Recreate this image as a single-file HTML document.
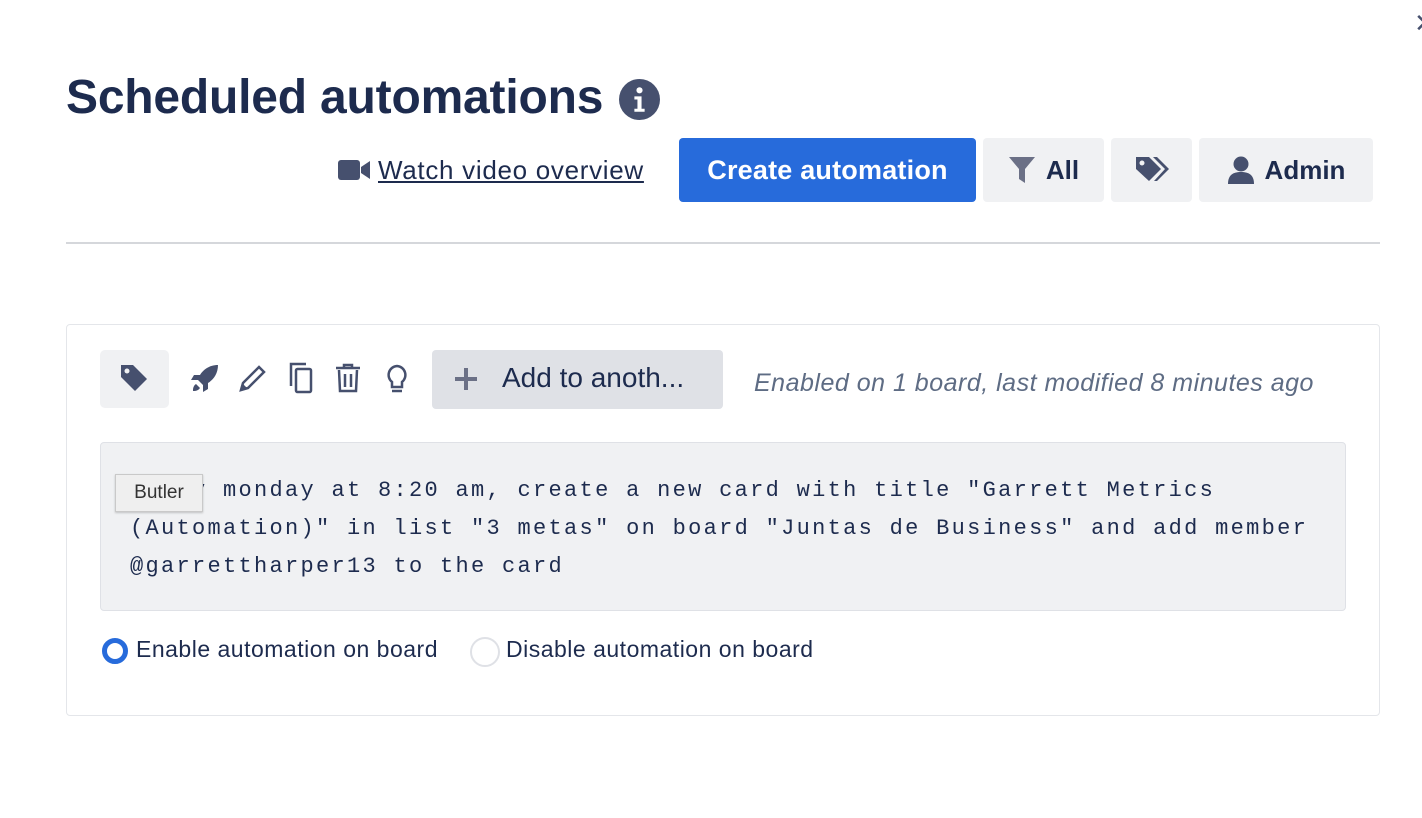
<!DOCTYPE html>
<html><head><style>
body{margin:0;width:1422px;height:818px;background:#fff;font-family:"Liberation Sans",sans-serif;color:#172b4d;position:relative;overflow:hidden}
.a{position:absolute}
h1{position:absolute;left:66px;top:68px;margin:0;font-size:48px;font-weight:bold;color:#1d2b4e;letter-spacing:-0.2px;line-height:60px}
.btn{position:absolute;top:138px;height:64px;border-radius:4px;background:#f0f1f3;font-weight:bold;font-size:26px;display:flex;align-items:center;justify-content:center;color:#1d2b4e}
.mono{font-family:"Liberation Mono",monospace;font-size:22px;letter-spacing:2.3px;line-height:38px;color:#1d2b4e}
</style></head><body>
<h1>Scheduled automations</h1>
<svg class="a" style="left:619px;top:79px" width="41" height="41" viewBox="0 0 40 40"><circle cx="20" cy="20" r="20" fill="#46506e"/><circle cx="20" cy="11" r="3" fill="#fff"/><path d="M15 17h7v12h3v3H15v-3h3v-9h-3z" fill="#fff"/></svg>
<svg class="a" style="left:338px;top:158px" width="33" height="24" viewBox="0 0 33 24"><rect x="0" y="2" width="22" height="20" rx="3" fill="#46506e"/><path d="M23 9l9-6v18l-9-6z" fill="#46506e"/></svg>
<div class="a" style="left:378px;top:155px;font-size:26px;letter-spacing:0.7px;text-decoration:underline;color:#1d2b4e">Watch video overview</div>
<div class="btn" style="left:679px;width:297px;background:#276bdb;color:#fff;font-size:27px;letter-spacing:0.2px">Create automation</div>
<div class="btn" style="left:983px;width:121px"><svg width="28" height="30" viewBox="0 0 28 30" style="margin-right:10px"><path d="M1 2h26L17 14v14l-6-4V14z" fill="#6b7086"/></svg>All</div>
<div class="btn" style="left:1111px;width:81px"><svg width="36" height="30" viewBox="0 0 36 30"><path d="M2 2h13l12 12-12 12L2 14z" fill="#46506e"/><circle cx="8" cy="8" r="2.5" fill="#f0f1f3"/><path d="M19 2h4l12 12-12 12h-3l11-12z" fill="#46506e"/></svg></div>
<div class="btn" style="left:1199px;width:174px"><svg width="28" height="30" viewBox="0 0 28 30" style="margin-right:10px"><circle cx="14" cy="9" r="7.5" fill="#46506e"/><path d="M1 29c0-9 5-12 13-12s13 3 13 12z" fill="#46506e"/></svg>Admin</div>
<div class="a" style="left:66px;top:242px;width:1314px;height:2px;background:#d5d7db"></div>
<div class="a" style="left:66px;top:324px;width:1312px;height:390px;border:1px solid #e4e6ea;border-radius:4px"></div>
<div class="a" style="left:100px;top:350px;width:69px;height:58px;background:#f0f1f3;border-radius:5px"></div>
<svg class="a" style="left:120px;top:364px" width="28" height="28" viewBox="0 0 28 28"><path d="M1 1h12l14 14-12 12L1 13z" fill="#46506e"/><circle cx="7" cy="7" r="2.5" fill="#f0f1f3"/></svg>
<svg class="a" style="left:190px;top:364px" width="30" height="28" viewBox="0 0 30 28"><path d="M28 1c-9 0-15 5-18 10H4l-3 5h7l5 5v7l5-3v-6c5-3 10-9 10-18zM6 20c-3 2-3 5-3 7 2 0 5 0 7-3z" fill="#46506e"/></svg>
<svg class="a" style="left:238px;top:363px" width="30" height="30" viewBox="0 0 30 30"><path d="M3 27l2-7L21 4l5 5-16 16z" fill="none" stroke="#46506e" stroke-width="2.5"/><path d="M3 27l2-6 4 4z" fill="#46506e"/></svg>
<svg class="a" style="left:287px;top:362px" width="28" height="32" viewBox="0 0 28 32"><path d="M4 24V2h15" fill="none" stroke="#46506e" stroke-width="2.5"/><rect x="9" y="7" width="15" height="23" rx="1.5" fill="none" stroke="#46506e" stroke-width="2.5"/></svg>
<svg class="a" style="left:334px;top:362px" width="28" height="32" viewBox="0 0 28 32"><path d="M2 6h24M10 6V3h8v3" fill="none" stroke="#46506e" stroke-width="2.5"/><path d="M5 8l1 21h16l1-21M11 12v13M17 12v13" fill="none" stroke="#46506e" stroke-width="2.5"/></svg>
<svg class="a" style="left:384px;top:364px" width="26" height="32" viewBox="0 0 26 32"><path d="M13 2a9 9 0 0 0-5 16v5h10v-5a9 9 0 0 0-5-16z" fill="none" stroke="#46506e" stroke-width="2.5"/><path d="M8 27h10" stroke="#46506e" stroke-width="2.5"/></svg>
<div class="a" style="left:432px;top:350px;width:291px;height:59px;background:#dfe1e6;border-radius:4px"></div>
<svg class="a" style="left:453px;top:366px" width="26" height="26" viewBox="0 0 26 26"><path d="M13 2v22M2 13h22" stroke="#6b7086" stroke-width="4"/></svg>
<div class="a" style="left:502px;top:362px;font-size:28px;color:#1d2b4e">Add to anoth...</div>
<div class="a" style="left:754px;top:369px;font-size:25px;letter-spacing:0.5px;font-style:italic;color:#5e6c84">Enabled on 1 board, last modified 8 minutes ago</div>
<div class="a" style="left:100px;top:442px;width:1244px;height:167px;background:#f0f1f3;border:1px solid #dfe1e6;border-radius:4px"></div>
<div class="a mono" style="left:130px;top:472px;width:1200px">Every monday at 8:20 am, create a new card with title "Garrett Metrics<br>(Automation)" in list "3 metas" on board "Juntas de Business" and add member<br>@garrettharper13 to the card</div>
<div class="a" style="left:115px;top:474px;width:86px;height:36px;background:#efefef;border:1px solid #c9c9c9;box-shadow:0 1px 2px rgba(0,0,0,.2);font-size:19px;color:#333;line-height:36px;text-align:center">Butler</div>
<div class="a" style="left:102px;top:638px;width:16px;height:16px;border:5px solid #276bdb;border-radius:50%;background:#fff"></div>
<div class="a" style="left:136px;top:636px;font-size:23px;letter-spacing:0.5px;color:#1d2b4e">Enable automation on board</div>
<div class="a" style="left:470px;top:637px;width:26px;height:26px;border:2px solid #dfe1e6;border-radius:50%"></div>
<div class="a" style="left:506px;top:636px;font-size:23px;letter-spacing:0.5px;color:#1d2b4e">Disable automation on board</div>
<div class="a" style="left:1414px;top:8px;font-size:26px;color:#46506e">✕</div>
</body></html>
